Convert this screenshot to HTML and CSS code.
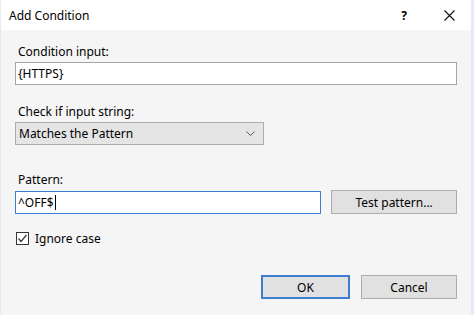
FILE: index.html
```html
<!DOCTYPE html>
<html lang="en">

<head>
    <meta charset="UTF-8">
    <title>Add Condition</title>
    <link rel="stylesheet" href="styles.css">
</head>

<body>
    <div class="dialog">
        <div class="titlebar">
            <span class="title">Add Condition</span>
            <span class="help">?</span>
            <svg class="close" width="11" height="11" viewBox="0 0 11 11">
                <path d="M0.5 0.5 L10.5 10.5 M10.5 0.5 L0.5 10.5" stroke="#111" stroke-width="1.1" fill="none" />
            </svg>
        </div>
        <div class="content">
            <div class="label">Condition input:</div>
            <div class="textbox wide">{HTTPS}</div>

            <div class="label second">Check if input string:</div>
            <div class="combo">
                <span>Matches the Pattern</span>
                <svg width="9" height="6" viewBox="0 0 9 6">
                    <path d="M0.5 0.5 L4.5 4.5 L8.5 0.5" stroke="#555" stroke-width="1" fill="none" />
                </svg>
            </div>

            <div class="label third">Pattern:</div>
            <div class="pattern-row">
                <div class="textbox focused">^OFF$<span class="caret"></span></div>
                <div class="button">Test pattern...</div>
            </div>

            <div class="check-row">
                <span class="checkbox">
                    <svg width="11" height="11" viewBox="0 0 11 11">
                        <path d="M1.5 5.5 L4 8.5 L9.5 2" stroke="#333" stroke-width="1.2" fill="none" />
                    </svg>
                </span>
                <span>Ignore case</span>
            </div>

            <div class="actions">
                <div class="button default">OK</div>
                <div class="button">Cancel</div>
            </div>
        </div>
    </div>
</body>

</html>
```

FILE: styles.css
```css
body {
    margin: 0;
    font-family: "Noto Sans", "Open Sans", sans-serif;
    font-size: 12px;
    color: #000;
    background-color: #f5f5f5;
}

.dialog {
    width: 474px;
    height: 315px;
    box-sizing: border-box;
    border-left: 1px solid #e6ecf5;
    border-right: 3px solid #e6ecf5;
    background-color: #f5f5f5;
}

.titlebar {
    height: 30px;
    display: flex;
    align-items: center;
    background-color: #fff;
    padding-left: 8px;
}

.title {
    flex: 1;
    font-size: 12px;
}

.help {
    font-weight: bold;
    font-size: 12px;
    margin-right: 37px;
}

.close {
    margin-right: 16px;
}

.content {
    padding: 14px 14px 0 14px;
}

.label {
    line-height: 16px;
    margin-left: 3px;
    margin-bottom: 2px;
}

.label.second {
    margin-top: 19px;
}

.label.third {
    margin-top: 27px;
}

.textbox {
    height: 23px;
    box-sizing: border-box;
    border: 1px solid #a5a5a5;
    background-color: #fff;
    padding: 0 2px;
    line-height: 21px;
    display: flex;
    align-items: center;
}

.textbox.focused {
    width: 307px;
    border-color: #3c7fd1;
}

.caret {
    width: 1px;
    height: 15px;
    background-color: #000;
    margin-left: 1px;
}

.combo {
    width: 249px;
    height: 23px;
    box-sizing: border-box;
    border: 1px solid #adadad;
    background-color: #e5e5e5;
    display: flex;
    align-items: center;
    justify-content: space-between;
    padding: 0 8px 0 3px;
}

.pattern-row {
    display: flex;
    gap: 10px;
    align-items: center;
}

.button {
    height: 24px;
    box-sizing: border-box;
    border: 1px solid #adadad;
    background-color: #e1e1e1;
    display: flex;
    align-items: center;
    justify-content: center;
}

.pattern-row .button {
    width: 126px;
}

.check-row {
    display: flex;
    align-items: center;
    gap: 6px;
    margin-top: 16px;
    margin-left: 1px;
}

.checkbox {
    width: 13px;
    height: 13px;
    box-sizing: border-box;
    border: 1px solid #333;
    background-color: #fff;
    display: flex;
    align-items: center;
    justify-content: center;
}

.actions {
    display: flex;
    justify-content: flex-end;
    gap: 11px;
    margin-top: 28px;
}

.actions .button {
    width: 96px;
}

.actions .button.default {
    width: 89px;
    border: 2px solid #3c7fd1;
}
```
